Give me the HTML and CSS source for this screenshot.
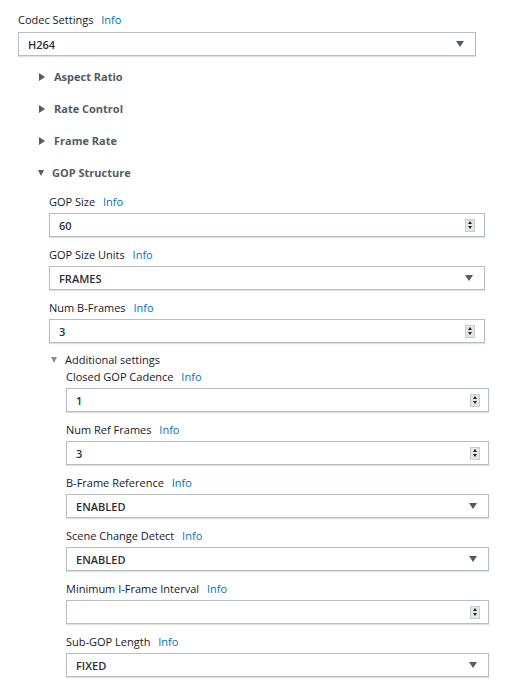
FILE: index.html
```html
<!DOCTYPE html>
<html>
<head>
<meta charset="utf-8">
<link rel="stylesheet" href="styles.css">
</head>
<body>
<div class="page">
  <div class="field top">
    <div class="label">Codec Settings <a class="info">Info</a></div>
    <div class="box select wide"><span class="val">H264</span><span class="caret"></span></div>
  </div>

  <div class="sections">
    <div class="sec"><span class="tri right"></span>Aspect Ratio</div>
    <div class="sec"><span class="tri right"></span>Rate Control</div>
    <div class="sec"><span class="tri right"></span>Frame Rate</div>
    <div class="sec"><span class="tri down"></span>GOP Structure</div>
  </div>

  <div class="gop">
    <div class="field">
      <div class="label">GOP Size <a class="info">Info</a></div>
      <div class="box"><span class="val">60</span><span class="spin"><i class="up"></i><i class="dn"></i></span></div>
    </div>
    <div class="field">
      <div class="label">GOP Size Units <a class="info">Info</a></div>
      <div class="box select"><span class="val">FRAMES</span><span class="caret"></span></div>
    </div>
    <div class="field">
      <div class="label">Num B-Frames <a class="info">Info</a></div>
      <div class="box"><span class="val">3</span><span class="spin"><i class="up"></i><i class="dn"></i></span></div>
    </div>

    <div class="addl"><span class="tri down light"></span>Additional settings</div>

    <div class="adv">
      <div class="field">
        <div class="label">Closed GOP Cadence <a class="info">Info</a></div>
        <div class="box"><span class="val">1</span><span class="spin"><i class="up"></i><i class="dn"></i></span></div>
      </div>
      <div class="field">
        <div class="label">Num Ref Frames <a class="info">Info</a></div>
        <div class="box"><span class="val">3</span><span class="spin"><i class="up"></i><i class="dn"></i></span></div>
      </div>
      <div class="field">
        <div class="label">B-Frame Reference <a class="info">Info</a></div>
        <div class="box select"><span class="val">ENABLED</span><span class="caret"></span></div>
      </div>
      <div class="field">
        <div class="label">Scene Change Detect <a class="info">Info</a></div>
        <div class="box select"><span class="val">ENABLED</span><span class="caret"></span></div>
      </div>
      <div class="field">
        <div class="label">Minimum I-Frame Interval <a class="info">Info</a></div>
        <div class="box"><span class="val"></span><span class="spin"><i class="up"></i><i class="dn"></i></span></div>
      </div>
      <div class="field">
        <div class="label">Sub-GOP Length <a class="info">Info</a></div>
        <div class="box select"><span class="val">FIXED</span><span class="caret"></span></div>
      </div>
    </div>
  </div>
</div>
</body>
</html>
```

FILE: styles.css
```css
* { box-sizing: border-box; }
html, body { margin: 0; padding: 0; background: #fff; }
body {
  font-family: "Open Sans", "Noto Sans", sans-serif;
  font-size: 11px;
  color: #232f3e;
}
.page {
  padding: 11px 0 0 18px;
  width: 511px;
}
.field {
  display: flex;
  flex-direction: column;
  margin-bottom: 9px;
}
.field.top { margin-bottom: 5px; width: 458px; }
.label {
  height: 18px;
  line-height: 18px;
  margin-bottom: 2px;
  color: #16191f;
  white-space: nowrap;
}
.field.top .label { margin-bottom: 3px; }
.info {
  color: #0073bb;
  margin-left: 5px;
}
.box {
  height: 24px;
  border: 1px solid #b6bec0;
  box-shadow: 0 1px 1px rgba(0,0,0,0.12);
  display: flex;
  align-items: center;
  justify-content: space-between;
  padding: 0 9px 0 9px;
  background: #fff;
}
.val {
  font-weight: 600;
  color: #2b3036;
}
.select { padding-right: 11px; }
.caret {
  width: 0; height: 0;
  border-left: 4px solid transparent;
  border-right: 4px solid transparent;
  border-top: 6px solid #545b64;
}
.spin {
  width: 10px;
  height: 13px;
  background: #e4e6e7;
  border: 1px solid #c8cccd;
  display: flex;
  flex-direction: column;
  align-items: center;
  justify-content: space-around;
  padding: 1px 0;
}
.spin i {
  display: block;
  width: 0; height: 0;
  border-left: 2.5px solid transparent;
  border-right: 2.5px solid transparent;
}
.spin .up { border-bottom: 3px solid #222; }
.spin .dn { border-top: 3px solid #222; }

.sections {
  display: flex;
  flex-direction: column;
  padding-left: 20px;
}
.sec {
  height: 32px;
  line-height: 32px;
  font-weight: 700;
  color: #545b64;
  display: flex;
  align-items: center;
}
.tri {
  display: inline-block;
  width: 0; height: 0;
  margin-right: 10px;
}
.tri.right {
  border-top: 4px solid transparent;
  border-bottom: 4px solid transparent;
  border-left: 6px solid #545b64;
  margin-left: 1px;
  margin-right: 9px;
}
.tri.down {
  border-left: 3.5px solid transparent;
  border-right: 3.5px solid transparent;
  border-top: 6px solid #545b64;
  margin-right: 8px;
}
.tri.down.light {
  border-top-color: #879196;
}
.gop {
  padding: 4px 0 0 31px;
  width: 467px;
}
.gop > .field { width: 436px; }
.addl {
  height: 16px;
  line-height: 16px;
  display: flex;
  align-items: center;
  color: #16191f;
  padding-left: 2px;
}
.addl .tri { margin-right: 8px; }
.adv {
  padding-left: 17px;
  width: 440px;
  display: flex;
  flex-direction: column;
}
.adv .field { width: 423px; }
.adv .box .spin { margin-right: -1px; }
```
